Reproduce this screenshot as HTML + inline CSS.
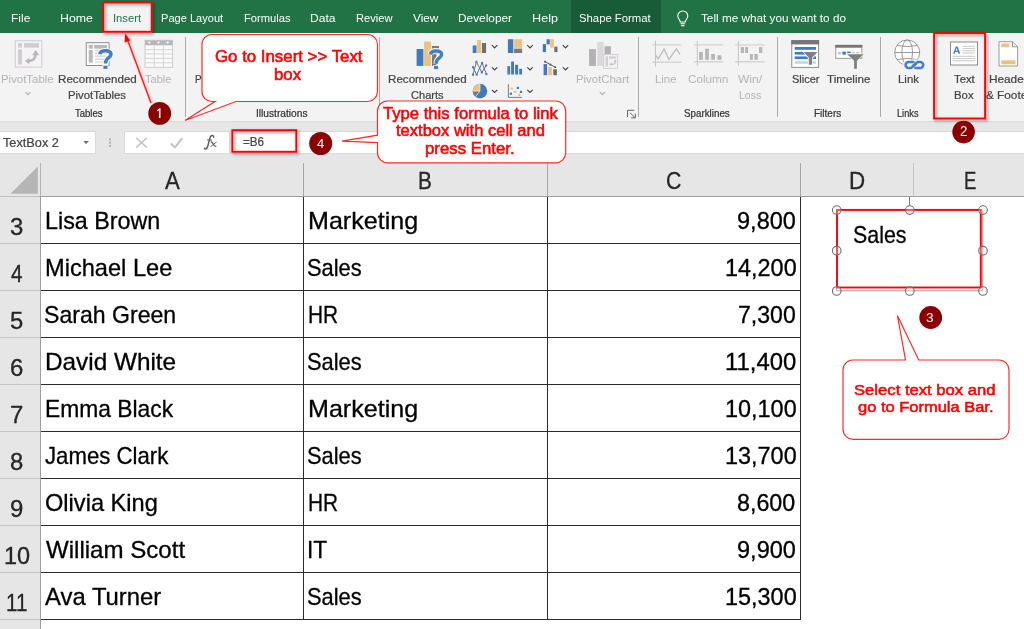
<!DOCTYPE html>
<html lang="en">
<head>
<meta charset="utf-8">
<title>Excel - Link text box to cell</title>
<style>
html,body{margin:0;padding:0}
body{width:1024px;height:629px;overflow:hidden;position:relative;background:#fff;font-family:"Liberation Sans",sans-serif}
#page{position:absolute;left:0;top:0;width:1024px;height:629px;overflow:hidden}
.abs{position:absolute}
.t{position:absolute;white-space:pre;line-height:1;transform-origin:0 0;font-family:"Liberation Sans",sans-serif}
#tabs{left:0;top:0;width:1024px;height:33px;background:#217346}
#tab-shape{left:571px;top:0;width:90px;height:33px;background:#185c37}
#tab-insert{left:103px;top:2px;width:49px;height:31px;background:#f3f3f3}
#ribbon{left:0;top:33px;width:1024px;height:88px;background:#f3f3f3}
#band{left:0;top:121px;width:1024px;height:76px;background:#e6e6e6}
#band-line{left:0;top:121px;width:1024px;height:1px;background:#dadada}
.sep{position:absolute;top:37px;width:1px;height:80px;background:#ababab}
#namebox{left:-1px;top:131px;width:95px;height:21px;background:#fff;border:1px solid #dadada}
#fxbox{left:124px;top:131px;width:104px;height:21px;background:#fff;border:1px solid #dadada}
#fbar{left:230px;top:131px;width:800px;height:21px;background:#fff;border:1px solid #dadada}
#sheet{left:41px;top:197px;width:983px;height:432px;background:#fff}
.hl{position:absolute;background:#9e9e9e}
.gl{position:absolute;background:#2b2b2b}
.rl{position:absolute;background:#c3c3c3;left:0;width:40px;height:1px}
svg{position:absolute;overflow:visible}
</style>
</head>
<body>
<div id="page">
<div class="abs" id="tabs"></div>
<div class="abs" id="tab-shape"></div>
<div class="abs" id="tab-insert"></div>
<div class="abs" id="ribbon"></div>
<div class="abs" id="band"></div>
<div class="abs" id="band-line"></div>
<div class="sep" style="left:185px"></div>
<div class="sep" style="left:379px"></div>
<div class="sep" style="left:638px"></div>
<div class="sep" style="left:777px"></div>
<div class="sep" style="left:880px"></div>
<div class="abs" id="namebox"></div>
<div class="abs" id="fxbox"></div>
<div class="abs" id="fbar"></div>
<div class="abs" id="sheet"></div>
<div class="abs" style="left:0;top:197px;width:40px;height:432px;background:#e6e6e6"></div>
<svg style="left:0;top:160px" width="41" height="37"><polygon points="10.5,33.8 37.8,33.8 37.8,6.5" fill="#b5b5b5"/></svg>
<div class="hl" style="left:0;top:196px;width:1024px;height:1px"></div>
<div class="abs" style="left:0;top:196px;width:40px;height:1px;background:#c2c2c2"></div>
<div class="abs" style="left:40px;top:163px;width:1px;height:33px;background:#b4b4b4"></div>
<div class="abs" style="left:303px;top:163px;width:1px;height:33px;background:#a6a6a6"></div>
<div class="abs" style="left:547px;top:163px;width:1px;height:33px;background:#a6a6a6"></div>
<div class="abs" style="left:800px;top:163px;width:1px;height:33px;background:#a6a6a6"></div>
<div class="abs" style="left:913px;top:163px;width:1px;height:33px;background:#c4c4c4"></div>
<div class="hl" style="left:40px;top:197px;width:1px;height:432px"></div>
<div class="rl" style="top:243px"></div>
<div class="rl" style="top:290px"></div>
<div class="rl" style="top:337px"></div>
<div class="rl" style="top:384px"></div>
<div class="rl" style="top:431px"></div>
<div class="rl" style="top:478px"></div>
<div class="rl" style="top:525px"></div>
<div class="rl" style="top:572px"></div>
<div class="rl" style="top:619px"></div>
<div class="gl" style="left:41px;top:243px;width:760px;height:1px"></div>
<div class="gl" style="left:41px;top:290px;width:760px;height:1px"></div>
<div class="gl" style="left:41px;top:337px;width:760px;height:1px"></div>
<div class="gl" style="left:41px;top:384px;width:760px;height:1px"></div>
<div class="gl" style="left:41px;top:431px;width:760px;height:1px"></div>
<div class="gl" style="left:41px;top:478px;width:760px;height:1px"></div>
<div class="gl" style="left:41px;top:525px;width:760px;height:1px"></div>
<div class="gl" style="left:41px;top:572px;width:760px;height:1px"></div>
<div class="gl" style="left:41px;top:619px;width:760px;height:1px"></div>
<div class="gl" style="left:303px;top:197px;width:1px;height:423px"></div>
<div class="gl" style="left:547px;top:197px;width:1px;height:423px"></div>
<div class="gl" style="left:800px;top:197px;width:1px;height:423px"></div>
<svg style="left:0;top:0" width="1024" height="160" viewBox="0 0 1024 160">
<!-- lightbulb -->
<g fill="none" stroke="#fff" stroke-width="1.1">
<path d="M680.3,22 C680.3,20 677.8,18.8 677.8,16 A5,5 0 0 1 687.8,16 C687.8,18.8 685.3,20 685.3,22 Z"/>
<path d="M680.5,23.8 H685.1 M681.2,25.6 H684.4"/>
</g>
<!-- PivotTable (disabled) -->
<rect x="15.3" y="40.7" width="26.5" height="26.4" fill="#f6f3f6" stroke="#d6d3d6" stroke-width="1.2"/>
<rect x="18" y="43.1" width="4" height="4.5" fill="#d1ced1"/>
<rect x="24" y="43.1" width="15" height="4.5" fill="#d1ced1"/>
<rect x="18" y="49.4" width="4" height="15.1" fill="#d1ced1"/>
<path d="M28,61.1 C33.5,61.1 35.7,58.5 35.7,53.5" fill="none" stroke="#bbb8bb" stroke-width="2.5"/>
<path d="M25,61.1 L29.4,57.7 V64.5 Z M35.7,50 L39.3,55.2 H32.1 Z" fill="#bbb8bb"/>
<path d="M25.4,92 L27.9,94.6 L30.4,92" fill="none" stroke="#b5b5b5" stroke-width="1.1"/>
<!-- Recommended PivotTables -->
<rect x="86.3" y="42.7" width="22.8" height="22.8" fill="#fff" stroke="#8c8c8c" stroke-width="1"/>
<rect x="88.7" y="44.9" width="4.1" height="3.8" fill="#b9b9b9"/><rect x="88.7" y="50.1" width="4.1" height="12.6" fill="#b9b9b9"/>
<rect x="94.2" y="44.9" width="12.9" height="3.8" fill="#b9b9b9"/>
<path d="M94.9,50.6 H106.6 M94.9,53.3 H106.6 M94.9,56.2 H106.6 M94.9,59.1 H106.6 M94.9,62 H106.6" stroke="#cfcfcf" stroke-width="1.2"/>
<g transform="translate(-330.6,-0.2)"><path d="M430.4,54.4 C430.8,51.9 433.4,50.9 436.2,50.9 C439.6,50.9 441.8,52.4 441.6,54.6 C441.4,57 438.8,58.2 437.5,59.6 C436.5,60.7 436.2,62 436.2,63.8" fill="none" stroke="#f3f3f3" stroke-width="5.6"/><rect x="433.2" y="65.2" width="5.6" height="4.6" fill="#f3f3f3"/><path d="M430.4,54.4 C430.8,51.9 433.4,50.9 436.2,50.9 C439.6,50.9 441.8,52.4 441.6,54.6 C441.4,57 438.8,58.2 437.5,59.6 C436.5,60.7 436.2,62 436.2,63.8" fill="none" stroke="#447fbf" stroke-width="3.5"/><rect x="434" y="66" width="4.1" height="3.1" fill="#447fbf"/></g>
<!-- Table (disabled) -->
<rect x="145" y="40.3" width="27.5" height="27" fill="#fbfafb" stroke="#d0ced0" stroke-width="1"/>
<rect x="145" y="40.3" width="27.5" height="5" fill="#b9b7b9"/>
<path d="M147.6,41.8 h3.4 l-1.7,2 Z M156.8,41.8 h3.4 l-1.7,2 Z M166,41.8 h3.4 l-1.7,2 Z" fill="#fff"/>
<path d="M145,49.6 H172.5 M145,54 H172.5 M145,58.4 H172.5 M145,62.8 H172.5 M154.2,45.3 V67.3 M163.4,45.3 V67.3" stroke="#d6d4d6" stroke-width="1"/>
<!-- Recommended Charts -->
<rect x="416.6" y="49" width="6.8" height="16.9" fill="#4279b8"/>
<rect x="424.1" y="41.6" width="7" height="24.3" fill="#eac282"/>
<path d="M432,46 H439 V48.4 H436.4 V65.9 H432 Z" fill="#7b7b7b"/>
<g transform="translate(0,0)"><path d="M430.4,54.4 C430.8,51.9 433.4,50.9 436.2,50.9 C439.6,50.9 441.8,52.4 441.6,54.6 C441.4,57 438.8,58.2 437.5,59.6 C436.5,60.7 436.2,62 436.2,63.8" fill="none" stroke="#f3f3f3" stroke-width="5.6"/><rect x="433.2" y="65.2" width="5.6" height="4.6" fill="#f3f3f3"/><path d="M430.4,54.4 C430.8,51.9 433.4,50.9 436.2,50.9 C439.6,50.9 441.8,52.4 441.6,54.6 C441.4,57 438.8,58.2 437.5,59.6 C436.5,60.7 436.2,62 436.2,63.8" fill="none" stroke="#447fbf" stroke-width="3.5"/><rect x="434" y="66" width="4.1" height="3.1" fill="#447fbf"/></g>
<!-- small chart icons row 1 -->
<rect x="472.7" y="45.5" width="3.8" height="7.5" fill="#4279b8"/>
<rect x="477.1" y="40.1" width="3.9" height="12.9" fill="#eac282"/>
<rect x="481.9" y="43" width="4.2" height="10" fill="#6f6f6f"/>
<rect x="507.9" y="39.2" width="5.4" height="13.8" fill="#4279b8"/>
<rect x="514.1" y="39.2" width="8" height="8.6" fill="#eac282"/>
<rect x="514.1" y="48.6" width="8" height="4.4" fill="#7b7b7b"/>
<rect x="542.8" y="44.1" width="3.2" height="8" fill="#4279b8"/>
<rect x="546.6" y="39.2" width="3.2" height="5.2" fill="#4279b8"/>
<rect x="550.3" y="39.2" width="3.6" height="8.4" fill="#eac282"/>
<rect x="554.3" y="46.7" width="3.2" height="5.4" fill="#6f6f6f"/>
<!-- row 2 -->
<path d="M473,74.7 L476.4,61.8 L481.8,72.5 L486.1,65.5" fill="none" stroke="#6f6f6f" stroke-width="1"/>
<path d="M473,67.2 L476.7,74.7 L482.1,62.9 L486.4,74.1" fill="none" stroke="#4279b8" stroke-width="1"/>
<g fill="#6f6f6f"><rect x="472" y="73.7" width="2" height="2"/><rect x="475.4" y="60.8" width="2" height="2"/><rect x="480.8" y="71.5" width="2" height="2"/><rect x="485.1" y="64.5" width="2" height="2"/></g>
<g fill="#4279b8"><rect x="472" y="66.2" width="2" height="2"/><rect x="475.7" y="73.7" width="2" height="2"/><rect x="481.1" y="61.9" width="2" height="2"/><rect x="485.4" y="73.1" width="2" height="2"/></g>
<rect x="507.4" y="66.1" width="2.7" height="8.4" fill="#4279b8"/>
<rect x="511.1" y="61.6" width="2.9" height="12.9" fill="#4279b8"/>
<rect x="515.1" y="64.8" width="3" height="9.7" fill="#4279b8"/>
<rect x="519.2" y="68.8" width="2.9" height="5.7" fill="#4279b8"/>
<rect x="543.6" y="64.1" width="3.5" height="11.1" fill="#4279b8"/>
<rect x="548.2" y="67.2" width="3.7" height="8" fill="#eac282"/>
<rect x="553.2" y="69.3" width="3.8" height="5.9" fill="#6f6f6f"/>
<path d="M545,61.6 L550.4,64.6 L555.2,67.2" fill="none" stroke="#5a5a5a" stroke-width="1"/>
<g fill="#5a5a5a"><rect x="544.1" y="60.7" width="1.8" height="1.8"/><rect x="549.5" y="63.7" width="1.8" height="1.8"/><rect x="554.3" y="66.3" width="1.8" height="1.8"/></g>
<!-- row 3 -->
<circle cx="480" cy="91.1" r="7.3" fill="#4279b8"/>
<path d="M480,91.1 L480,83.8 A7.3,7.3 0 0 0 472.7,91.1 Z" fill="#eac282"/>
<path d="M480,91.1 L472.7,91.1 A7.3,7.3 0 0 0 475.4,96.8 Z" fill="#7b7b7b"/>
<path d="M480,83.8 V91.1 H472.7 M480,91.1 L475.4,96.8" fill="none" stroke="#f3f3f3" stroke-width="0.7"/>
<path d="M508.4,84.3 V97.4 H521.9" fill="none" stroke="#7b7b7b" stroke-width="1"/>
<g fill="#eac282"><rect x="510.6" y="87.5" width="2.2" height="2.2"/><rect x="514.1" y="90.8" width="2.2" height="2.2"/><rect x="518.1" y="93.8" width="2.2" height="2.2"/></g>
<g fill="#4279b8"><rect x="516.8" y="86.8" width="2.2" height="2.2"/><rect x="519.9" y="90.8" width="2.2" height="2.2"/><rect x="509.8" y="92.6" width="2.2" height="2.2"/></g>
<!-- chevrons -->
<g fill="none" stroke="#444" stroke-width="1.2">
<path d="M491.9,45.2 L494.6,47.9 L497.3,45.2"/><path d="M527.3,45.2 L530,47.9 L532.7,45.2"/><path d="M562.8,45.2 L565.5,47.9 L568.2,45.2"/>
<path d="M491.9,67.3 L494.6,70 L497.3,67.3"/><path d="M527.3,67.3 L530,70 L532.7,67.3"/><path d="M562.8,67.3 L565.5,70 L568.2,67.3"/>
<path d="M491.9,89.8 L494.6,92.5 L497.3,89.8"/><path d="M527.3,89.8 L530,92.5 L532.7,89.8"/>
</g>
<!-- PivotChart (disabled) -->
<rect x="589.1" y="49.1" width="6.8" height="16.8" fill="#b3b1b3"/>
<rect x="597.2" y="41.9" width="6.4" height="24" fill="#dcd9dc"/>
<rect x="604.5" y="46.2" width="6.4" height="10" fill="#b3b1b3"/>
<rect x="603.6" y="54.4" width="14" height="14" fill="#f4f1f4" stroke="#d3d0d3" stroke-width="1"/>
<rect x="605.6" y="56.3" width="2.4" height="10.2" fill="#d3d0d3"/>
<rect x="609" y="56.3" width="6.8" height="2.4" fill="#d3d0d3"/>
<path d="M610.6,64.3 h2.2 a2.4,2.4 0 0 0 2.4,-2.4 v-0.8" fill="none" stroke="#bfbcbf" stroke-width="1.1"/>
<path d="M611.4,62.6 L609.4,64.3 L611.4,66 Z M613.5,61.4 L615.2,59.5 L616.9,61.4 Z" fill="#bfbcbf"/>
<path d="M599.8,92 L602.4,94.6 L605,92" fill="none" stroke="#b5b5b5" stroke-width="1.1"/>
<!-- dialog launcher -->
<path d="M627.5,117 V110.3 H634.2" fill="none" stroke="#666" stroke-width="1"/>
<path d="M630,112.8 L635,117.6 M635.3,113.6 V117.9 H631" fill="none" stroke="#666" stroke-width="1"/>
<!-- Sparklines (disabled) -->
<g stroke="#d6d4d6" stroke-width="1.4" fill="none">
<path d="M652.1,44.9 H681.3 M652.1,62.3 H681.3 M693.7,44.9 H723.1 M693.7,61.8 H723.1 M735.2,44.9 H764.6 M735.2,61.8 H764.6"/>
</g>
<g stroke="#c6c4c6" stroke-width="1" fill="none">
<path d="M655.5,40.8 V66.6 M697.3,40.8 V65.9 M738.4,40.8 V65.9"/>
</g>
<path d="M655.5,54.8 L658.2,59.1 L664.1,48.9 L668.9,59.4 L676.4,48.9 L680,54.3" fill="none" stroke="#bdbbbd" stroke-width="1.3"/>
<g fill="#b7b5b7">
<rect x="699.1" y="51.9" width="3.8" height="7.9"/><rect x="705.1" y="48.7" width="3.8" height="11.1"/><rect x="711.2" y="54" width="3.8" height="5.8"/><rect x="717.5" y="55.3" width="3.9" height="4.5"/>
<rect x="740.8" y="47.1" width="3.2" height="5.9"/><rect x="745.1" y="47.1" width="3" height="5.9"/><rect x="759" y="47.1" width="3.3" height="5.9"/>
<rect x="749.9" y="54" width="3" height="5.8"/><rect x="754.4" y="54" width="3.4" height="5.8"/>
</g>
<!-- Slicer -->
<rect x="791.8" y="40.6" width="26.8" height="26.8" fill="#fff" stroke="#8c8c8c" stroke-width="1"/>
<rect x="791.3" y="40.1" width="27.8" height="4.3" fill="#767676"/>
<rect x="794.7" y="47" width="21.3" height="2.8" fill="#3f7cc4"/>
<rect x="794.7" y="51.9" width="21.3" height="2.7" fill="#3f7cc4"/>
<rect x="794.7" y="56.4" width="21.3" height="2.7" fill="#3f7cc4"/>
<rect x="794.7" y="61.2" width="21.3" height="2.6" fill="#bfd5ee"/>
<path d="M802.3,51.2 H818.4 L813,58.2 V65.6 H808 V58.2 Z" fill="#fff"/>
<path d="M803.6,52 H817.4 L812.2,57.8 V64.8 H808.8 V57.8 Z" fill="#808080"/>
<!-- Timeline -->
<rect x="835.8" y="45.4" width="26" height="13" fill="#fff" stroke="#9a9a9a" stroke-width="1"/>
<rect x="835.3" y="44.9" width="27" height="2.8" fill="#767676"/>
<rect x="838" y="52" width="3" height="2.4" fill="#c4c4c4"/>
<rect x="842.3" y="51.6" width="3.6" height="3" fill="#3f7cc4"/>
<rect x="847.1" y="51.6" width="3.6" height="1.6" fill="#3f7cc4"/>
<rect x="852" y="52" width="2.8" height="1.4" fill="#c4c4c4"/>
<rect x="856.3" y="52" width="3.2" height="1.4" fill="#c4c4c4"/>
<path d="M845.6,53.4 H865 L858,60.6 V69.6 H853 V60.6 Z" fill="#f3f3f3"/>
<path d="M847.3,54.3 H863.6 L856.9,60.8 V68.8 H854.1 V60.8 Z" fill="#808080"/>
<!-- Link -->
<g fill="none" stroke="#8e8e8e" stroke-width="0.9">
<circle cx="907.2" cy="52.5" r="12.5" fill="#fff"/>
<ellipse cx="907.2" cy="52.5" rx="5.3" ry="12.5"/>
<path d="M894.7,52.5 H919.7 M897,45.4 Q907.2,47.8 917.4,45.4 M897,59.6 Q907.2,57.2 917.4,59.6"/>
</g>
<path d="M908.4,61.8 H920.4 A3.1,3.1 0 0 1 920.4,68 H908.4 A3.1,3.1 0 0 1 908.4,61.8 Z" fill="#f3f3f3" stroke="#f3f3f3" stroke-width="4.6"/>
<g fill="none" stroke="#447fbf" stroke-width="2.5" stroke-linecap="round">
<path d="M913.4,61.9 H908.6 A3,3 0 0 0 908.6,67.9 H911.2 L916,63.9"/>
<path d="M915.4,67.9 H920.2 A3,3 0 0 0 920.2,61.9 H917.6 L912.8,65.9"/>
</g>
<!-- Text Box -->
<rect x="950.5" y="42" width="27" height="23" fill="#fff" stroke="#8c8c8c" stroke-width="1"/>
<path d="M962.6,46.4 H974.9 M962.6,48.6 H974.9 M962.6,50.8 H974.9 M962.6,53 H974.9 M953,56.3 H974.9 M953,58.6 H974.9 M953,60.8 H974.9" stroke="#c9c9c9" stroke-width="1"/>
<path d="M953.2,53.8 L955.9,46.6 H957.6 L960.3,53.8 H958.7 L958.1,52 H955.3 L954.7,53.8 Z M955.7,50.8 H957.7 L956.7,47.9 Z" fill="#3f7cc4"/>
<!-- Header & Footer -->
<path d="M999,41.7 H1012.5 L1017.6,46.8 V66 H999 Z" fill="#fff" stroke="#9a9a9a" stroke-width="1"/>
<path d="M1012.5,41.7 V46.8 H1017.6" fill="none" stroke="#9a9a9a" stroke-width="1"/>
<rect x="1001.3" y="43.4" width="7.8" height="3.9" fill="#eac282"/>
<rect x="1001.3" y="60.3" width="14.2" height="4" fill="#eac282"/>
<!-- name box dropdown -->
<path d="M83.2,141 H89 L86.1,144.2 Z" fill="#777"/>
<!-- formula bar dots -->
<g fill="#b0b0b0"><rect x="109" y="138.3" width="2" height="2"/><rect x="109" y="141.6" width="2" height="2"/><rect x="109" y="144.9" width="2" height="2"/></g>
<!-- X, check, fx -->
<path d="M136.3,138 L146.8,147.4 M146.8,138 L136.3,147.4" stroke="#c2c2c2" stroke-width="1.5" fill="none"/>
<path d="M170.8,143.6 L175,147.4 L182.3,138.1" stroke="#c2c2c2" stroke-width="2" fill="none"/>
<!-- fx -->
<g fill="none" stroke="#5f5f5f" stroke-linecap="round">
<path d="M213.7,137.3 C213.7,135.3 211.5,134.7 210.4,136.7 C209.2,139.2 208.5,144.8 207.3,147.4 C206.5,149.3 204.9,149.5 204.5,148.2" stroke-width="1.5"/>
<path d="M207.4,140 H211.8" stroke-width="1.1"/>
<path d="M211.3,142 C212.6,141.6 213.7,146.6 215.8,146.4" stroke-width="1.4"/>
<path d="M216.2,142.2 C214.6,142 212.6,146.6 211,146.5" stroke-width="0.9"/>
</g>
</svg>

<svg style="left:0;top:0" width="1024" height="629" viewBox="0 0 1024 629">
<defs>
<filter id="sh" x="-20%" y="-20%" width="150%" height="150%"><feDropShadow dx="1.5" dy="1.5" stdDeviation="1.5" flood-color="#000" flood-opacity="0.45"/></filter>
<filter id="sh2" x="-50%" y="-20%" width="200%" height="150%"><feDropShadow dx="1.2" dy="1" stdDeviation="0.8" flood-color="#000" flood-opacity="0.3"/></filter>
</defs>
<!-- red highlight: Insert tab -->
<rect x="103.3" y="2.5" width="48.4" height="29.3" fill="none" stroke="#ff0000" stroke-width="1.9" filter="url(#sh)"/>
<!-- red highlight: Text Box button -->
<rect x="934.1" y="33.1" width="51" height="85.4" fill="none" stroke="#ff0000" stroke-width="1.9" filter="url(#sh)"/>
<!-- red highlight: formula -->
<rect x="232.3" y="130.2" width="64" height="21.6" fill="none" stroke="#ff0000" stroke-width="1.9" filter="url(#sh)"/>
<!-- arrow 1 -> Insert -->
<g filter="url(#sh2)"><line x1="151" y1="103" x2="127" y2="38.5" stroke="#ff1a1a" stroke-width="1.4"/>
<polygon points="125.2,33.3 130.2,40.4 124.6,42.4" fill="#ff0000"/></g>
<!-- callout 1 -->
<path d="M212,34.5 H367.5 A10,10 0 0 1 377.5,44.5 V91.5 A10,10 0 0 1 367.5,101.5 H236 L185,120.5 L215,101.5 H212 A10,10 0 0 1 202,91.5 V44.5 A10,10 0 0 1 212,34.5 Z" fill="#fff" stroke="#ff2a2a" stroke-width="1.2"/>
<!-- callout 4 -->
<path d="M387.5,101 H555.7 A10,10 0 0 1 565.7,111 V152.8 A10,10 0 0 1 555.7,162.8 H387.5 A10,10 0 0 1 377.5,152.8 V142.6 L342,141.2 L377.5,135.2 V111 A10,10 0 0 1 387.5,101 Z" fill="#fff" stroke="#ff2a2a" stroke-width="1.2"/>
<!-- callout 3 -->
<path d="M853,360 H905.5 L897.4,315.5 L918.7,360 H999 A10,10 0 0 1 1009,370 V429.3 A10,10 0 0 1 999,439.3 H853 A10,10 0 0 1 843,429.3 V370 A10,10 0 0 1 853,360 Z" fill="#fff" stroke="#ff2a2a" stroke-width="1.2"/>
<!-- circles -->
<circle cx="159.7" cy="113.4" r="11.4" fill="#8b0000"/>
<path d="M156.9,110.3 L159.5,108.2 H160.5 V117.9 H158.9 V110.3 L157.4,111.4 Z" fill="#fff"/>
<circle cx="963.6" cy="132.1" r="11.3" fill="#8b0000"/>
<circle cx="930.7" cy="317.5" r="11.4" fill="#8b0000"/>
<circle cx="320.7" cy="143.5" r="11.5" fill="#8b0000"/>
<!-- text box shape on sheet -->
<line x1="909.5" y1="197" x2="909.5" y2="206" stroke="#7a7a7a" stroke-width="1"/>
<rect x="836.7" y="210.1" width="146" height="80.7" fill="#fff" stroke="#9a9a9a" stroke-width="1"/>
<rect x="837" y="209.9" width="143.8" height="77.6" fill="none" stroke="#ff0000" stroke-width="1.9"/>
<g fill="#fff" fill-opacity="0.3" stroke="#6e6e6e" stroke-width="1.1">
<circle cx="836.7" cy="210.1" r="4.3"/><circle cx="909.8" cy="210.1" r="4.3"/><circle cx="983" cy="210.1" r="4.3"/>
<circle cx="836.7" cy="250.7" r="4.3"/><circle cx="983" cy="250.7" r="4.3"/>
<circle cx="836.7" cy="291" r="4.3"/><circle cx="909.8" cy="291" r="4.3"/><circle cx="983" cy="291" r="4.3"/>
</g>
</svg>

<span class="t" style="left:11.21px;top:13.07px;font-size:11.5px;color:#ffffff;transform:scaleX(1.0405)">File</span>
<span class="t" style="left:60.18px;top:13.07px;font-size:11.5px;color:#ffffff;transform:scaleX(1.0721)">Home</span>
<span class="t" style="left:112.61px;top:13.07px;font-size:11.5px;color:#217346;transform:scaleX(0.9736)">Insert</span>
<span class="t" style="left:160.99px;top:13.07px;font-size:11.5px;color:#ffffff;transform:scaleX(0.9622)">Page Layout</span>
<span class="t" style="left:243.58px;top:13.07px;font-size:11.5px;color:#ffffff;transform:scaleX(0.9714)">Formulas</span>
<span class="t" style="left:310.29px;top:13.07px;font-size:11.5px;color:#ffffff;transform:scaleX(1.0493)">Data</span>
<span class="t" style="left:355.79px;top:13.07px;font-size:11.5px;color:#ffffff;transform:scaleX(0.9705)">Review</span>
<span class="t" style="left:412.82px;top:13.07px;font-size:11.5px;color:#ffffff;transform:scaleX(1.0261)">View</span>
<span class="t" style="left:458.31px;top:13.07px;font-size:11.5px;color:#ffffff;transform:scaleX(1.0314)">Developer</span>
<span class="t" style="left:532.05px;top:13.07px;font-size:11.5px;color:#ffffff;transform:scaleX(1.0990)">Help</span>
<span class="t" style="left:578.53px;top:13.07px;font-size:11.5px;color:#ffffff;transform:scaleX(0.9840)">Shape Format</span>
<span class="t" style="left:700.95px;top:13.07px;font-size:11.5px;color:#ffffff;transform:scaleX(1.0215)">Tell me what you want to do</span>
<span class="t" style="left:1.42px;top:73.89px;font-size:11px;color:#b3b3b3;transform:scaleX(1.0369)">PivotTable</span>
<span class="t" style="left:57.61px;top:73.89px;font-size:11px;color:#444444;-webkit-text-stroke:0.22px currentColor;transform:scaleX(1.0564)">Recommended</span>
<span class="t" style="left:68.43px;top:89.59px;font-size:11px;color:#444444;-webkit-text-stroke:0.22px currentColor;transform:scaleX(1.0301)">PivotTables</span>
<span class="t" style="left:145.45px;top:73.89px;font-size:11px;color:#b3b3b3;transform:scaleX(1.0053)">Table</span>
<span class="t" style="left:75.35px;top:109.10px;font-size:10.4px;color:#333;-webkit-text-stroke:0.22px currentColor;transform:scaleX(0.9175)">Tables</span>
<span class="t" style="left:194.76px;top:73.89px;font-size:11px;color:#444444;-webkit-text-stroke:0.22px currentColor;transform:scaleX(0.9070)">P</span>
<span class="t" style="left:256.11px;top:109.10px;font-size:10.4px;color:#333;-webkit-text-stroke:0.22px currentColor;transform:scaleX(0.9808)">Illustrations</span>
<span class="t" style="left:388.31px;top:73.89px;font-size:11px;color:#444444;-webkit-text-stroke:0.22px currentColor;transform:scaleX(1.0550)">Recommended</span>
<span class="t" style="left:411.44px;top:89.59px;font-size:11px;color:#444444;-webkit-text-stroke:0.22px currentColor;transform:scaleX(1.0052)">Charts</span>
<span class="t" style="left:576.22px;top:73.89px;font-size:11px;color:#b3b3b3;transform:scaleX(1.0347)">PivotChart</span>
<span class="t" style="left:655.10px;top:73.89px;font-size:11px;color:#b3b3b3;transform:scaleX(1.0333)">Line</span>
<span class="t" style="left:688.06px;top:73.89px;font-size:11px;color:#b3b3b3;transform:scaleX(1.0648)">Column</span>
<span class="t" style="left:737.72px;top:73.89px;font-size:11px;color:#b3b3b3;transform:scaleX(1.0889)">Win/</span>
<span class="t" style="left:738.68px;top:89.59px;font-size:11px;color:#b3b3b3;transform:scaleX(0.9548)">Loss</span>
<span class="t" style="left:684.35px;top:109.10px;font-size:10.4px;color:#333;-webkit-text-stroke:0.22px currentColor;transform:scaleX(0.9429)">Sparklines</span>
<span class="t" style="left:791.52px;top:73.89px;font-size:11px;color:#444444;-webkit-text-stroke:0.22px currentColor;transform:scaleX(0.9991)">Slicer</span>
<span class="t" style="left:827.42px;top:73.89px;font-size:11px;color:#444444;-webkit-text-stroke:0.22px currentColor;transform:scaleX(1.0539)">Timeline</span>
<span class="t" style="left:814.41px;top:109.10px;font-size:10.4px;color:#333;-webkit-text-stroke:0.22px currentColor;transform:scaleX(0.9647)">Filters</span>
<span class="t" style="left:897.80px;top:73.89px;font-size:11px;color:#444444;-webkit-text-stroke:0.22px currentColor;transform:scaleX(1.0396)">Link</span>
<span class="t" style="left:897.07px;top:109.10px;font-size:10.4px;color:#333;-webkit-text-stroke:0.22px currentColor;transform:scaleX(0.8853)">Links</span>
<span class="t" style="left:953.52px;top:73.89px;font-size:11px;color:#444444;-webkit-text-stroke:0.22px currentColor;transform:scaleX(1.0288)">Text</span>
<span class="t" style="left:953.53px;top:89.59px;font-size:11px;color:#444444;-webkit-text-stroke:0.22px currentColor;transform:scaleX(1.0334)">Box</span>
<span class="t" style="left:989.09px;top:73.89px;font-size:11px;color:#444444;-webkit-text-stroke:0.22px currentColor;transform:scaleX(1.0704)">Header</span>
<span class="t" style="left:986.17px;top:89.59px;font-size:11px;color:#444444;-webkit-text-stroke:0.22px currentColor;transform:scaleX(1.0703)">&amp; Footer</span>
<span class="t" style="left:3.18px;top:136.84px;font-size:12px;color:#444444;-webkit-text-stroke:0.22px currentColor;transform:scaleX(1.0616)">TextBox 2</span>
<span class="t" style="left:242.78px;top:136.24px;font-size:12px;color:#444444;-webkit-text-stroke:0.22px currentColor;transform:scaleX(0.9705)">=B6</span>
<span class="t" style="left:165.20px;top:170.26px;font-size:23.2px;color:#262626;-webkit-text-stroke:0.3px currentColor;transform:scaleX(0.9580)">A</span>
<span class="t" style="left:417.79px;top:170.26px;font-size:23.2px;color:#262626;-webkit-text-stroke:0.3px currentColor;transform:scaleX(0.8964)">B</span>
<span class="t" style="left:665.99px;top:170.26px;font-size:23.2px;color:#262626;-webkit-text-stroke:0.3px currentColor;transform:scaleX(0.9157)">C</span>
<span class="t" style="left:848.70px;top:170.26px;font-size:23.2px;color:#262626;-webkit-text-stroke:0.3px currentColor;transform:scaleX(0.9632)">D</span>
<span class="t" style="left:964.12px;top:170.26px;font-size:23.2px;color:#262626;-webkit-text-stroke:0.3px currentColor;transform:scaleX(0.8002)">E</span>
<span class="t" style="left:9.79px;top:216.26px;font-size:23.2px;color:#262626;-webkit-text-stroke:0.3px currentColor;transform:scaleX(1.0310)">3</span>
<span class="t" style="left:10.72px;top:263.26px;font-size:23.2px;color:#262626;-webkit-text-stroke:0.3px currentColor;transform:scaleX(0.8926)">4</span>
<span class="t" style="left:9.83px;top:310.26px;font-size:23.2px;color:#262626;-webkit-text-stroke:0.3px currentColor;transform:scaleX(1.0268)">5</span>
<span class="t" style="left:9.76px;top:357.26px;font-size:23.2px;color:#262626;-webkit-text-stroke:0.3px currentColor;transform:scaleX(1.0338)">6</span>
<span class="t" style="left:9.78px;top:404.26px;font-size:23.2px;color:#262626;-webkit-text-stroke:0.3px currentColor;transform:scaleX(1.0324)">7</span>
<span class="t" style="left:9.81px;top:451.26px;font-size:23.2px;color:#262626;-webkit-text-stroke:0.3px currentColor;transform:scaleX(1.0288)">8</span>
<span class="t" style="left:9.78px;top:498.26px;font-size:23.2px;color:#262626;-webkit-text-stroke:0.3px currentColor;transform:scaleX(1.0329)">9</span>
<span class="t" style="left:4.08px;top:545.26px;font-size:23.2px;color:#262626;-webkit-text-stroke:0.3px currentColor;transform:scaleX(1.0143)">10</span>
<span class="t" style="left:5.84px;top:592.26px;font-size:23.2px;color:#262626;-webkit-text-stroke:0.3px currentColor;transform:scaleX(0.8900)">11</span>
<span class="t" style="left:44.64px;top:209.76px;font-size:23.2px;color:#000;-webkit-text-stroke:0.3px currentColor;transform:scaleX(1.0047)">Lisa Brown</span>
<span class="t" style="left:307.74px;top:209.76px;font-size:23.2px;color:#000;-webkit-text-stroke:0.3px currentColor;transform:scaleX(1.0818)">Marketing</span>
<span class="t" style="left:736.70px;top:209.76px;font-size:23.2px;color:#000;-webkit-text-stroke:0.3px currentColor;transform:scaleX(1.0150)">9,800</span>
<span class="t" style="left:44.63px;top:256.76px;font-size:23.2px;color:#000;-webkit-text-stroke:0.3px currentColor;transform:scaleX(1.0183)">Michael Lee</span>
<span class="t" style="left:307.13px;top:256.76px;font-size:23.2px;color:#000;-webkit-text-stroke:0.3px currentColor;transform:scaleX(0.9435)">Sales</span>
<span class="t" style="left:724.58px;top:256.76px;font-size:23.2px;color:#000;-webkit-text-stroke:0.3px currentColor;transform:scaleX(1.0108)">14,200</span>
<span class="t" style="left:43.87px;top:303.76px;font-size:23.2px;color:#000;-webkit-text-stroke:0.3px currentColor;transform:scaleX(0.9955)">Sarah Green</span>
<span class="t" style="left:307.99px;top:303.76px;font-size:23.2px;color:#000;-webkit-text-stroke:0.3px currentColor;transform:scaleX(0.8995)">HR</span>
<span class="t" style="left:737.82px;top:303.76px;font-size:23.2px;color:#000;-webkit-text-stroke:0.3px currentColor;transform:scaleX(0.9955)">7,300</span>
<span class="t" style="left:44.68px;top:350.76px;font-size:23.2px;color:#000;-webkit-text-stroke:0.3px currentColor;transform:scaleX(1.0489)">David White</span>
<span class="t" style="left:307.13px;top:350.76px;font-size:23.2px;color:#000;-webkit-text-stroke:0.3px currentColor;transform:scaleX(0.9435)">Sales</span>
<span class="t" style="left:724.56px;top:350.76px;font-size:23.2px;color:#000;-webkit-text-stroke:0.3px currentColor;transform:scaleX(1.0292)">11,400</span>
<span class="t" style="left:44.77px;top:397.76px;font-size:23.2px;color:#000;-webkit-text-stroke:0.3px currentColor;transform:scaleX(0.9846)">Emma Black</span>
<span class="t" style="left:307.74px;top:397.76px;font-size:23.2px;color:#000;-webkit-text-stroke:0.3px currentColor;transform:scaleX(1.0818)">Marketing</span>
<span class="t" style="left:724.58px;top:397.76px;font-size:23.2px;color:#000;-webkit-text-stroke:0.3px currentColor;transform:scaleX(1.0108)">10,100</span>
<span class="t" style="left:44.68px;top:444.76px;font-size:23.2px;color:#000;-webkit-text-stroke:0.3px currentColor;transform:scaleX(0.9569)">James Clark</span>
<span class="t" style="left:307.13px;top:444.76px;font-size:23.2px;color:#000;-webkit-text-stroke:0.3px currentColor;transform:scaleX(0.9435)">Sales</span>
<span class="t" style="left:724.58px;top:444.76px;font-size:23.2px;color:#000;-webkit-text-stroke:0.3px currentColor;transform:scaleX(1.0108)">13,700</span>
<span class="t" style="left:44.80px;top:491.76px;font-size:23.2px;color:#000;-webkit-text-stroke:0.3px currentColor;transform:scaleX(1.0181)">Olivia King</span>
<span class="t" style="left:307.99px;top:491.76px;font-size:23.2px;color:#000;-webkit-text-stroke:0.3px currentColor;transform:scaleX(0.8995)">HR</span>
<span class="t" style="left:737.33px;top:491.76px;font-size:23.2px;color:#000;-webkit-text-stroke:0.3px currentColor;transform:scaleX(1.0040)">8,600</span>
<span class="t" style="left:46.10px;top:538.76px;font-size:23.2px;color:#000;-webkit-text-stroke:0.3px currentColor;transform:scaleX(1.0382)">William Scott</span>
<span class="t" style="left:307.17px;top:538.76px;font-size:23.2px;color:#000;-webkit-text-stroke:0.3px currentColor;transform:scaleX(0.9816)">IT</span>
<span class="t" style="left:736.70px;top:538.76px;font-size:23.2px;color:#000;-webkit-text-stroke:0.3px currentColor;transform:scaleX(1.0150)">9,900</span>
<span class="t" style="left:45.20px;top:585.76px;font-size:23.2px;color:#000;-webkit-text-stroke:0.3px currentColor;transform:scaleX(1.0293)">Ava Turner</span>
<span class="t" style="left:307.13px;top:585.76px;font-size:23.2px;color:#000;-webkit-text-stroke:0.3px currentColor;transform:scaleX(0.9435)">Sales</span>
<span class="t" style="left:724.58px;top:585.76px;font-size:23.2px;color:#000;-webkit-text-stroke:0.3px currentColor;transform:scaleX(1.0108)">15,300</span>
<span class="t" style="left:853.25px;top:223.76px;font-size:23.2px;color:#000;-webkit-text-stroke:0.3px currentColor;transform:scaleX(0.9223)">Sales</span>
<span class="t" style="left:215.31px;top:49.24px;font-size:15.9px;color:#ff0000;-webkit-text-stroke:0.55px currentColor;transform:scaleX(1.0591)">Go to Insert &gt;&gt; Text</span>
<span class="t" style="left:274.10px;top:66.94px;font-size:15.9px;color:#ff0000;-webkit-text-stroke:0.55px currentColor;transform:scaleX(1.0563)">box</span>
<span class="t" style="left:382.90px;top:105.84px;font-size:15.9px;color:#ff0000;-webkit-text-stroke:0.55px currentColor;transform:scaleX(1.0477)">Type this formula to link</span>
<span class="t" style="left:396.45px;top:123.34px;font-size:15.9px;color:#ff0000;-webkit-text-stroke:0.55px currentColor;transform:scaleX(1.0408)">textbox with cell and</span>
<span class="t" style="left:425.40px;top:141.14px;font-size:15.9px;color:#ff0000;-webkit-text-stroke:0.55px currentColor;transform:scaleX(1.0561)">press Enter.</span>
<span class="t" style="left:854.39px;top:381.88px;font-size:15.5px;color:#ff0000;-webkit-text-stroke:0.55px currentColor;transform:scaleX(1.0741)">Select text box and</span>
<span class="t" style="left:857.77px;top:398.88px;font-size:15.5px;color:#ff0000;-webkit-text-stroke:0.55px currentColor;transform:scaleX(1.0628)">go to Formula Bar.</span>
<span class="t" style="left:959.86px;top:125.32px;font-size:13.8px;color:#ffffff;transform:scaleX(0.9685)">2</span>
<span class="t" style="left:925.88px;top:310.80px;font-size:13px;color:#ffffff;transform:scaleX(1.0578)">3</span>
<span class="t" style="left:316.83px;top:136.66px;font-size:13.4px;color:#ffffff;transform:scaleX(0.9706)">4</span>
</div>
</body>
</html>
